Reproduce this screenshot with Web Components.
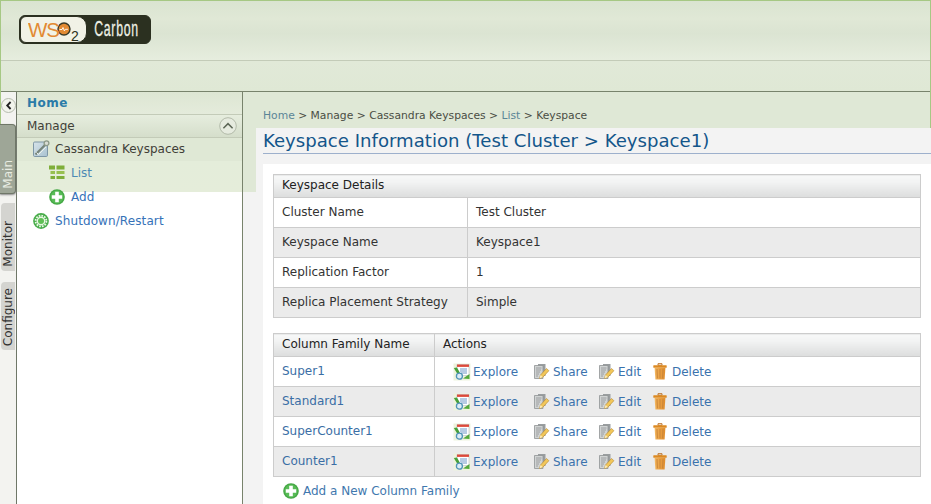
<!DOCTYPE html>
<html lang="en"><head><meta charset="utf-8"><title>Keyspace</title>
<style>
html,body{margin:0;padding:0;height:504px;overflow:hidden;background:#fff}
body{font:12px/1.2 "DejaVu Sans",sans-serif;color:#333}
carbon-app{width:931px;height:504px}
</style></head><body>
<carbon-app></carbon-app>
<script>
const ICONS={
plus:`<svg width="16" height="16" viewBox="0 0 16 16"><circle cx="8" cy="8" r="7.8" fill="#45a845"/><circle cx="8" cy="8" r="6.4" fill="#58bb56"/><path d="M6.2 2.8h3.6v3.4h3.4v3.6H9.8v3.4H6.2V9.8H2.8V6.2h3.4z" fill="#fff"/></svg>`,
list:`<svg width="16" height="16" viewBox="0 0 16 16"><g fill="#7fae3a"><rect x="0" y="0.5" width="6" height="4"/><rect x="7.5" y="0.5" width="8" height="4"/></g><g fill="#98c050"><rect x="1.5" y="6" width="4.5" height="3"/><rect x="7.5" y="6" width="8" height="3"/></g><g fill="#7fae3a"><rect x="1.5" y="11" width="4.5" height="3"/><rect x="7.5" y="11" width="8" height="3"/></g></svg>`,
gear:`<svg width="16" height="16" viewBox="0 0 16 16"><circle cx="8" cy="8" r="7.9" fill="#48ad4a"/><circle cx="8" cy="8" r="5.4" fill="none" stroke="#e9f7e4" stroke-width="1.8" stroke-dasharray="1.7 1.1"/><circle cx="8" cy="8" r="4.4" fill="#e9f7e4"/><circle cx="8" cy="8" r="3" fill="#5fc055"/></svg>`,
ks:`<svg width="17" height="17" viewBox="0 0 17 17"><defs><linearGradient id="k" x1="0" y1="0" x2="1" y2="1"><stop offset="0" stop-color="#d6e3ea"/><stop offset="1" stop-color="#a9c2d0"/></linearGradient></defs><rect x="0.5" y="2" width="14" height="14.5" rx="1.2" fill="url(#k)" stroke="#7e97a6"/><path d="M2.5 14.5 12 5" stroke="#76847a" stroke-width="2.2"/><path d="M3.5 12.5 5.5 14.5 13 7" stroke="#eef3ea" stroke-width="1" fill="none"/><circle cx="13.5" cy="3.2" r="2.4" fill="#d8dcd4" stroke="#8d9a88" stroke-width="1.3"/></svg>`,
explore:`<svg width="18" height="18" viewBox="0 0 18 18"><rect x="0.5" y="0.5" width="17" height="17" fill="#eef3de"/><path d="M4 1.5h12v11H9L4 8z" fill="#fff" stroke="#b7bcc4" stroke-width=".6"/><rect x="4" y="1.5" width="12" height="2.4" fill="#dd4a3a"/><path d="M7 6h7M7 8h7M8 10h6" stroke="#6f98c8" stroke-width="1"/><path d="M0.8 5 4 4.6 7 10 4.5 11z" fill="#47a03c"/><path d="M10 15.5 16.5 11v5z" fill="#52a83c"/><circle cx="6.4" cy="13.2" r="3" fill="#dcecf6" stroke="#4f94b8" stroke-width="1.3"/></svg>`,
doc:`<svg width="17" height="17" viewBox="0 0 17 17"><path d="M5 1h7.5v12H5z" fill="#9a9ea0"/><path d="M1.5 2.5h8.5v13H1.5z" fill="#d0d3d3" stroke="#8f9394" stroke-width=".8"/><path d="M3 5h5.5M3 7h5M3 9h4M3 11h3M3 13h2" stroke="#8f9395" stroke-width=".8"/><path d="M6.5 15.5 7.5 12 13.5 5.5l2.4 2.2-6 6.4z" fill="#f2c75a" stroke="#b6862a" stroke-width=".6"/><path d="M6.5 15.5 7.5 12l2.4 2.1z" fill="#fbeab8"/></svg>`,
trash:`<svg width="14" height="17" viewBox="0 0 14 17"><defs><linearGradient id="t" x1="0" x2="1" y1="0" y2="0"><stop offset="0" stop-color="#f3b65e"/><stop offset="1" stop-color="#e08c2a"/></linearGradient></defs><path d="M5 .7h4v1.6H5z" fill="none" stroke="#b8691a" stroke-width=".9"/><rect x=".3" y="2.2" width="13.4" height="2.6" rx=".5" fill="#dd8a22"/><path d="M1.6 4.8h10.8L11.6 16.6H2.4z" fill="url(#t)"/><path d="M4 6 4.4 15.4M7 6v9.4M10 6 9.6 15.4" stroke="#c9853a" stroke-width="1"/></svg>`,
up:`<svg width="18" height="18" viewBox="0 0 18 18"><circle cx="9" cy="9" r="8.3" fill="#e6ebdf" stroke="#b3bbaa"/><path d="M4.4 11.2 9 6.6l4.6 4.6" fill="none" stroke="#5c6656" stroke-width="1.5"/></svg>`
};
function def(name,css,html,extra){
  customElements.define(name,class extends HTMLElement{
    constructor(){super();const r=this.attachShadow({mode:'open'});
      r.innerHTML=`<style>${css}</style>${typeof html==='function'?html(this):html}`;}
    connectedCallback(){ if(extra) extra(this); }
  });
}
def('app-icon',':host{display:inline-flex;flex:none;line-height:0}','<span id="i"></span>',el=>{el.shadowRoot.getElementById('i').innerHTML=ICONS[el.getAttribute('name')]||''});

def('carbon-logo',`:host{display:flex;width:132px;height:29px;border:1px solid #2b3020;border-radius:6px;box-sizing:border-box;background:#2b3020;overflow:hidden;align-items:stretch}
.l{width:67px;flex:none;background:#f1f2e6;border:1px solid #2b3020;border-radius:6px 10px 10px 6px;display:flex;align-items:center;box-sizing:border-box;padding:0 0 1px 7px}
.w{font:400 21px/1 "Liberation Sans",sans-serif;color:#e28a33;letter-spacing:-1.2px;transform:scaleX(.98);transform-origin:0 50%;width:29px;flex:none}
svg{flex:none}
.two{font:14px/1 "Liberation Sans",sans-serif;color:#2b3020;margin:13px 0 0 0}
.c{flex:1;font:400 22px/26px "Liberation Sans",sans-serif;color:#eef0e4;display:block;transform:scaleX(.56);transform-origin:0 50%;padding-left:13px;letter-spacing:1.2px;white-space:nowrap;-webkit-text-stroke:.3px #eef0e4}`,
`<div class="l"><span class="w">WS</span><svg width="14" height="14" viewBox="0 0 14 14"><circle cx="7" cy="7" r="6" fill="#e28a33" stroke="#3a3a28" stroke-width="1.4"/><path d="M2.5 7.5h2.5l1-2 1.4 3.4 1-1.6h2.5" fill="none" stroke="#fff" stroke-width=".9"/></svg><span class="two">2</span></div><span class="c">Carbon</span>`);

def('top-header',`:host{display:flex;flex-direction:column;flex:none;border-top:1px solid #a6c884;border-left:1px solid #a6c884;border-right:1px solid #a6c884}
.a{height:59px;background:linear-gradient(#dae4d1,#e0e8d6 30%,#dbe4d2 55%,#e6edde);padding:14px 18px 0;box-sizing:border-box;display:flex;align-items:flex-start}
.b{height:30px;border-top:1px solid #c3cbb8;background:linear-gradient(#e1e9d8,#dfe8d5)}
.c{height:1px;background:#78836c}`,
`<div class="a"><carbon-logo></carbon-logo></div><div class="b"></div><div class="c"></div>`);

def('side-tab',`:host{display:flex;align-items:center;justify-content:flex-end;flex-direction:column;padding-bottom:4px;width:14px;margin-left:1px;border-radius:4px 0 0 4px;background:#d4d4d0;color:#333;font:12px "DejaVu Sans",sans-serif;box-sizing:border-box}
:host([active]){background:#9ea697;color:#e8ece2;border:1px solid #6f7768;border-left:0;width:16px;box-shadow:0 1px 2px #8a8a8a;border-radius:0 4px 4px 0;margin-left:0}
span{writing-mode:vertical-rl;transform:rotate(180deg);white-space:nowrap}`,`<span><slot></slot></span>`);

def('side-rail',`:host{display:flex;flex-direction:column;width:17px;flex:none;box-sizing:border-box;border-right:1px solid #6f7768;background:linear-gradient(90deg,#a6c884 1px,#f3f3f0 1px) 0 0/100% 32px no-repeat,#f3f3f0}
.back{width:15px;height:15px;border-radius:50%;border:1px solid #b6bcae;background:#f2f4ec;margin:6px 0 0 1px;display:flex;align-items:center;justify-content:center;box-sizing:border-box;flex:none}
.tabs{display:flex;flex-direction:column;margin-top:11px}
side-tab:nth-child(1){height:70px}
side-tab:nth-child(2){height:68px;margin-top:9px}
side-tab:nth-child(3){height:68px;margin-top:11px}`,
`<div class="back"><svg width="8" height="9" viewBox="0 0 8 9"><path d="M5.6 1 2.2 4.5 5.6 8" fill="none" stroke="#222" stroke-width="1.8"/></svg></div>
<div class="tabs"><side-tab active>Main</side-tab><side-tab>Monitor</side-tab><side-tab>Configure</side-tab></div>`);

def('menu-row',`:host{display:flex;align-items:center;box-sizing:border-box;height:24px;font:12px "DejaVu Sans",sans-serif;color:#3f4038;gap:6px;white-space:nowrap}
:host([lvl="1"]){padding-left:16px}:host([lvl="2"]){padding-left:32px}
:host([link]){color:#3672b8;letter-spacing:.1px}:host([soft]){color:#4d8ab4}
app-icon{width:16px}`,
el=>`${el.getAttribute('icon')?`<app-icon name="${el.getAttribute('icon')}"></app-icon>`:''}<slot></slot>`);

def('side-menu',`:host{display:block;width:226px;flex:none;box-sizing:border-box;border-right:1px solid #78836c;background:linear-gradient(#fff,#fff) 0 100%/100% calc(100% - 100px) no-repeat,linear-gradient(#e4edda,#e5edda) 0 69px/100% 31px no-repeat,#dfe8d5}
.home{height:22px;display:flex;align-items:center;padding-left:10px;font:700 12px "DejaVu Sans",sans-serif;color:#2b7ba8;letter-spacing:.45px;border-bottom:1px solid #c3cbb8;background:linear-gradient(#dde6d3,#e4ebdb)}
.man{height:22px;display:flex;align-items:center;justify-content:space-between;padding:0 5px 0 10px;font:12px "DejaVu Sans",sans-serif;color:#3f4038;border-bottom:1px solid #c3cbb8;background:linear-gradient(#e6edde,#d5decb)}
menu-row.c{height:23px;padding-bottom:2px}`,
`<div class="home">Home</div>
<div class="man"><span>Manage</span><app-icon name="up"></app-icon></div>
<menu-row class="c" lvl="1" icon="ks">Cassandra Keyspaces</menu-row>
<menu-row lvl="2" icon="list" soft>List</menu-row>
<menu-row lvl="2" icon="plus" link>Add</menu-row>
<menu-row lvl="1" icon="gear" link>Shutdown/Restart</menu-row>`);

def('info-table',`:host{display:block}
table{border-collapse:collapse;table-layout:fixed;width:648px;font:12px "DejaVu Sans",sans-serif;color:#333}
th,td{border:1px solid #ccc;padding:0 0 2px 8px;text-align:left;font-weight:400;white-space:nowrap;overflow:hidden;box-sizing:border-box}
th{height:23px;background:linear-gradient(#f7f8f8,#f2f3f3 30%,#dcdddd);color:#222}
td{height:30px}
tr.alt td{background:#ebebeb}`,
el=>{const c=JSON.parse(el.getAttribute('data-rows'));const w=+el.getAttribute('col');
 return `<table><colgroup><col style="width:${w}px"><col></colgroup><tr><th colspan="2">${el.getAttribute('heading')}</th></tr>${c.map((r,i)=>`<tr class="${i%2?'alt':''}"><td>${r[0]}</td><td>${r[1]}</td></tr>`).join('')}</table>`});

def('action-link',`:host{display:inline-flex;align-items:center;color:#3a72ad;font:12px "DejaVu Sans",sans-serif;white-space:nowrap;gap:var(--g,3px);height:16px}`,
el=>`<app-icon name="${el.getAttribute('icon')}"></app-icon><slot></slot>`);

def('family-table',`:host{display:block}
table{border-collapse:collapse;table-layout:fixed;width:648px;font:12px "DejaVu Sans",sans-serif;color:#333}
th,td{border:1px solid #ccc;padding:0 0 2px 8px;text-align:left;font-weight:400;white-space:nowrap;box-sizing:border-box}
th{height:23px;background:linear-gradient(#f7f8f8,#f2f3f3 30%,#dcdddd);color:#222}
td{height:30px}
td.n{color:#3a6ea5;padding-bottom:1px}
td.a{padding:0 0 0 18px}
tr.alt td{background:#ebebeb}
.acts{display:flex;align-items:center;height:16px}
action-link:nth-child(1){--g:2px;width:80px}
action-link:nth-child(2){width:65px}
action-link:nth-child(3){width:55px}
action-link:nth-child(4){--g:5px}`,
el=>{const names=['Super1','Standard1','SuperCounter1','Counter1'];
 const acts=`<div class="acts"><action-link icon="explore">Explore</action-link><action-link icon="doc">Share</action-link><action-link icon="doc">Edit</action-link><action-link icon="trash">Delete</action-link></div>`;
 return `<table><colgroup><col style="width:161px"><col></colgroup><tr><th>Column Family Name</th><th>Actions</th></tr>${names.map((n,i)=>`<tr class="${i%2?'alt':''}"><td class="n">${n}</td><td class="a">${acts}</td></tr>`).join('')}</table>`});

def('main-pane',`:host{display:flex;flex:1;min-width:0;background:#f3f3f3}
.gut{width:13px;flex:none;background:linear-gradient(#dfe8d6,#dfe8d6) 0 0/100% 100px no-repeat}
.col{flex:1;min-width:0;display:flex;flex-direction:column}
.crumb{height:36px;background:#dfe8d6;border-right:1px solid #a6c884;box-sizing:border-box;padding:17px 0 0 7px;font:10.75px/13px "DejaVu Sans",sans-serif;color:#4a4d44;white-space:nowrap}
.crumb a{color:#5b8596}
.head{height:36px;box-sizing:border-box;background:#f3f3f3;padding-left:7px}
h1{margin:0;height:26px;box-sizing:border-box;font:400 18.12px/26px "DejaVu Sans",sans-serif;color:#14568a;border-bottom:1px solid #9db0cc;white-space:nowrap}
.body{flex:1;background:#fff;margin-left:7px;padding:10px 9px 0 10px;min-height:0}
family-table{margin-top:15px}
.add{display:flex;align-items:center;gap:4px;margin:6px 0 0 10px;color:#3f78ae;font:12px "DejaVu Sans",sans-serif}`,
`<div class="gut"></div><div class="col">
<div class="crumb"><a>Home</a> &gt; Manage &gt; Cassandra Keyspaces &gt; <a>List</a> &gt; Keyspace</div>
<div class="head"><h1>Keyspace Information (Test Cluster &gt; Keyspace1)</h1></div>
<div class="body">
<info-table heading="Keyspace Details" col="194" data-rows='[["Cluster Name","Test Cluster"],["Keyspace Name","Keyspace1"],["Replication Factor","1"],["Replica Placement Strategy","Simple"]]'></info-table>
<family-table></family-table>
<div class="add"><app-icon name="plus"></app-icon>Add a New Column Family</div>
</div></div>`);

def('carbon-app',`:host{display:flex;flex-direction:column;overflow:hidden}
.row{display:flex;flex:1;min-height:0}`,
`<top-header></top-header><div class="row"><side-rail></side-rail><side-menu></side-menu><main-pane></main-pane></div>`);
</script></body></html>
